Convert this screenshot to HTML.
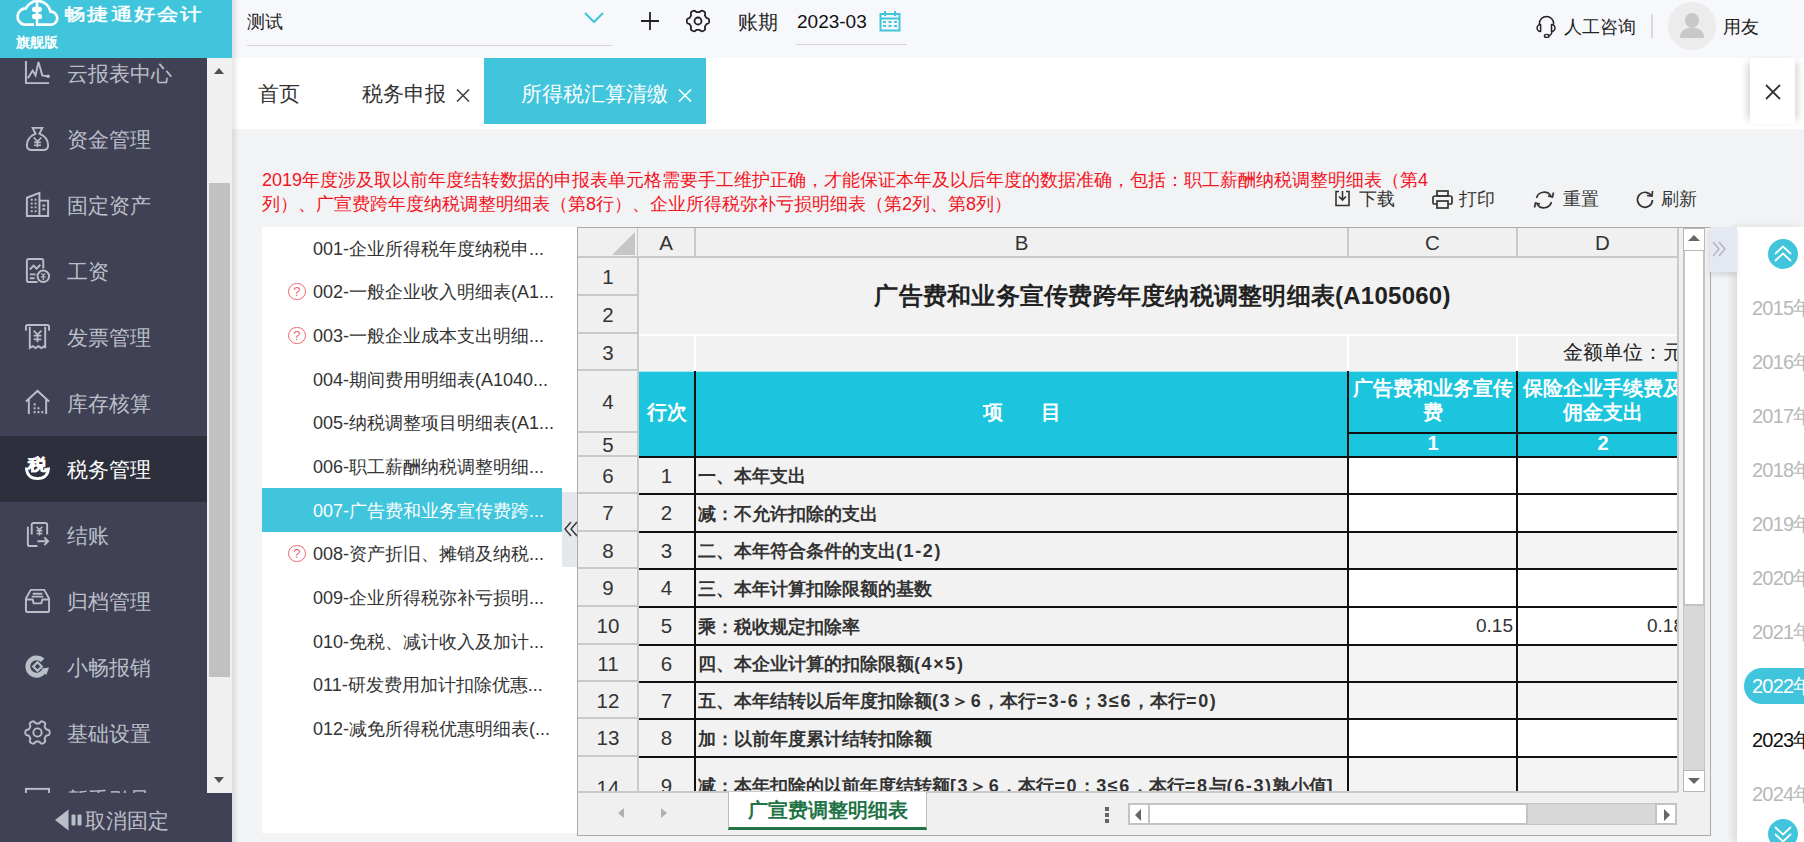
<!DOCTYPE html>
<html><head><meta charset="utf-8">
<style>
*{margin:0;padding:0;box-sizing:border-box;}
html,body{width:1804px;height:842px;overflow:hidden;font-family:"Liberation Sans",sans-serif;background:#f2f3f5;position:relative;color:#333;}
.abs{position:absolute;}
.nw{white-space:nowrap;}
/* sidebar */
#logo{left:0;top:0;width:232px;height:58px;background:#40c5dc;z-index:3;}
#side{left:0;top:58px;width:207px;height:735px;background:#414155;overflow:hidden;z-index:3;}
#sbar{left:207px;top:58px;width:25px;height:735px;background:#f0f0f0;z-index:3;}
#sfoot{left:0;top:793px;width:232px;height:49px;background:#414155;z-index:3;}
#sshadow{left:232px;top:0;width:7px;height:842px;background:linear-gradient(to right,rgba(0,0,0,0.10),rgba(0,0,0,0));z-index:2;}
.mi{position:absolute;left:0;width:207px;height:66px;}
.mi .t{position:absolute;left:67px;top:1px;line-height:66px;font-size:21px;color:#b9bfc7;white-space:nowrap;}
.mi svg{position:absolute;left:24px;top:19px;width:27px;height:27px;}
/* header */
#hdr{left:232px;top:0;width:1572px;height:58px;background:#f7f8fb;}
#tabs{left:232px;top:58px;width:1572px;height:70.6px;background:#fff;}
.tab{position:absolute;top:0;height:66px;line-height:72px;font-size:21px;color:#333;white-space:nowrap;}
/* notice */
#notice{left:262px;top:168px;font-size:18px;line-height:24px;color:#f5141e;white-space:nowrap;}
.tool{position:absolute;top:187px;height:24px;line-height:24px;font-size:17.5px;color:#333;white-space:nowrap;}
.tool svg{position:absolute;top:3px;}
/* list */
#list{left:262px;top:227px;width:315px;height:606px;background:#fff;}
.li{position:absolute;left:0;width:300px;height:43.6px;line-height:43.6px;font-size:18px;color:#333;white-space:nowrap;}
.li span{position:absolute;left:51px;top:1.5px;}
.li.act{background:#40c5dc;color:#fff;}
.q{position:absolute;left:26px;top:13px;width:17.5px;height:17.5px;border:1.5px solid #f0646e;border-radius:50%;color:#f0646e;font-size:13px;line-height:15px;text-align:center;}
#collapse{left:562px;top:492px;width:16px;height:75px;background:#e4e7ec;}
/* sheet */
#sheet{left:577px;top:227px;width:1134px;height:609px;border:1px solid #ababab;background:#f0f0f0;}
#grid{left:638px;top:0;width:1039px;height:792px;overflow:hidden;}
.c{position:absolute;}
.hl{position:absolute;left:0;width:1039px;height:2px;background:#111;}
.vl{position:absolute;width:2px;background:#111;}
.tn{position:absolute;left:0;width:57px;text-align:center;font-size:20.5px;color:#333;}
.tb{position:absolute;left:60px;margin-top:0.8px;font-size:18px;font-weight:bold;color:#333;white-space:nowrap;}
.a{letter-spacing:1.6px;}
.tv{position:absolute;text-align:right;font-size:19px;color:#333;white-space:nowrap;}
.rh{position:absolute;left:578px;width:60px;text-align:center;font-size:20.5px;color:#333;background:#f0f0f0;border-bottom:2px solid #c9c9c9;}
.colh{position:absolute;top:228px;height:30px;line-height:30px;z-index:2;text-align:center;font-size:20.5px;color:#333;background:#f0f0f0;border-right:2px solid #c9c9c9;border-bottom:2px solid #c9c9c9;}
.hw{color:#fff;font-weight:bold;font-size:20px;}
#years{left:1737px;top:227px;width:67px;height:615px;background:#fff;box-shadow:-4px 0 8px rgba(0,0,0,0.10);}
.yr{position:absolute;left:15px;height:36px;line-height:36px;font-size:20px;color:#b8b8b8;white-space:nowrap;letter-spacing:-0.8px;}
</style></head>
<body>
<div id="logo" class="abs">
  <svg class="abs" style="left:0;top:0" width="70" height="34" viewBox="0 0 70 34">
    <path d="M34 24.6 H24 A8.2 8.2 0 0 1 25.8 8.4 A13.2 13.2 0 0 1 50.6 11.7 A6.45 6.45 0 0 1 51 24.6 H37" fill="none" stroke="#fff" stroke-width="2.7"/>
    <line x1="37" y1="0" x2="37" y2="25.9" stroke="#fff" stroke-width="2.6"/>
    <rect x="32" y="6.7" width="10" height="5.2" rx="2.6" fill="#fff"/>
    <rect x="32" y="13.8" width="10" height="5.2" rx="2.6" fill="#fff"/>
  </svg>
  <div class="abs nw" style="left:64px;top:4px;font-size:18px;color:#fff;letter-spacing:1px;line-height:20px;-webkit-text-stroke:0.5px #fff;transform:scale(1.225,0.97);transform-origin:0 0;">畅捷通好会计</div>
  <div class="abs nw" style="left:16px;top:34px;font-size:14px;color:#fff;font-weight:bold;line-height:16px;">旗舰版</div>
</div>
<div id="side" class="abs">
<div class="mi" style="top:-18px;"><svg width="28" height="28" viewBox="0 0 28 28"><path d="M2 2 V25 H26" fill="none" stroke="#b9bfc7" stroke-width="2"/><path d="M4 20 L9 12 L12 17 L15 3 L19 17 L25 18" fill="none" stroke="#b9bfc7" stroke-width="2"/><circle cx="25" cy="18" r="1.8" fill="#b9bfc7"/></svg><div class="t" style="">云报表中心</div></div>
<div class="mi" style="top:48px;"><svg width="28" height="28" viewBox="0 0 28 28"><path d="M9 3 H19 L16 9 Q25 13 25 21 Q25 26 20 26 H8 Q3 26 3 21 Q3 13 12 9 Z" fill="none" stroke="#b9bfc7" stroke-width="2"/><path d="M10 13 L14 17 L18 13 M14 17 V23 M10.5 18 H17.5 M10.5 21 H17.5" fill="none" stroke="#b9bfc7" stroke-width="1.6"/></svg><div class="t" style="">资金管理</div></div>
<div class="mi" style="top:114px;"><svg width="28" height="28" viewBox="0 0 28 28"><path d="M3 26 V7 L16 2 V26 Z M16 10 H25 V26 H3" fill="none" stroke="#b9bfc7" stroke-width="2"/><path d="M7 9h2M11 9h2M7 13h2M11 13h2M7 17h2M11 17h2M7 21h2M11 21h2M19 15h3M19 19h3" stroke="#b9bfc7" stroke-width="2"/></svg><div class="t" style="">固定资产</div></div>
<div class="mi" style="top:180px;"><svg width="28" height="28" viewBox="0 0 28 28"><path d="M20 12 V4 Q20 2 18 2 H5 Q3 2 3 4 V24 Q3 26 5 26 H14" fill="none" stroke="#b9bfc7" stroke-width="2"/><path d="M6 13 L10 9 L13 12 L17 8" fill="none" stroke="#b9bfc7" stroke-width="2"/><path d="M6 18h6M6 22h5" stroke="#b9bfc7" stroke-width="2"/><circle cx="20" cy="20" r="6" fill="none" stroke="#b9bfc7" stroke-width="2"/><path d="M18 17 L20 19 L22 17 M20 19 V24 M17.5 20.5h5" fill="none" stroke="#b9bfc7" stroke-width="1.3"/></svg><div class="t" style="">工资</div></div>
<div class="mi" style="top:246px;"><svg width="28" height="28" viewBox="0 0 28 28"><path d="M2 8 V4 Q2 2 4 2 H24 Q26 2 26 4 V8 M6 4 V26 L9 24 L12 26 L15 24 L18 26 L21 24 L22 26 V4" fill="none" stroke="#b9bfc7" stroke-width="2"/><path d="M10 8 L14 12 L18 8 M14 12 V20 M10 13h8M10 17h8" fill="none" stroke="#b9bfc7" stroke-width="1.8"/></svg><div class="t" style="">发票管理</div></div>
<div class="mi" style="top:312px;"><svg width="28" height="28" viewBox="0 0 28 28"><path d="M2 13 L14 2 L26 13 M5 11 V26 M23 11 V26" fill="none" stroke="#b9bfc7" stroke-width="2"/><path d="M10 16h2M10 20h2M10 24h2M14 24h2M18 24h2M14 20h2" stroke="#b9bfc7" stroke-width="2.2"/></svg><div class="t" style="">库存核算</div></div>
<div class="mi" style="top:378px;background:#2d2f3c;"><svg width="28" height="28" viewBox="0 0 28 28"><path d="M2.5 13 Q3 24.5 14 24.5 Q25 24.5 25.5 13" fill="none" stroke="#fff" stroke-width="3"/><text x="4.2" y="16" font-size="17" font-weight="bold" fill="#fff" stroke="#fff" stroke-width="0.6" textLength="19.5" lengthAdjust="spacingAndGlyphs">税</text></svg><div class="t" style="color:#fff;">税务管理</div></div>
<div class="mi" style="top:444px;"><svg width="28" height="28" viewBox="0 0 28 28"><path d="M4 6 V24 Q4 26 6 26 H14" fill="none" stroke="#b9bfc7" stroke-width="2"/><path d="M8 14 V4 Q8 2 10 2 H22 Q24 2 24 4 V14" fill="none" stroke="#b9bfc7" stroke-width="2"/><path d="M13 6 L16 9 L19 6 M16 9 V15 M13 10h6M13 13h6" fill="none" stroke="#b9bfc7" stroke-width="1.6"/><path d="M14 21 H25 M21 17 L25 21 L21 25" fill="none" stroke="#b9bfc7" stroke-width="2"/></svg><div class="t" style="">结账</div></div>
<div class="mi" style="top:510px;"><svg width="28" height="28" viewBox="0 0 28 28"><path d="M7 3 H21 L26 12 V24 Q26 26 24 26 H4 Q2 26 2 24 V12 Z M2 13 H9 L10 17 H18 L19 13 H26" fill="none" stroke="#b9bfc7" stroke-width="2"/><path d="M9 7h10M8 10h12" stroke="#b9bfc7" stroke-width="2"/></svg><div class="t" style="">归档管理</div></div>
<div class="mi" style="top:576px;"><svg width="28" height="28" viewBox="0 0 28 28"><path d="M19.36 7.64 A9 9 0 1 0 21.16 17.80" fill="none" stroke="#b9bfc7" stroke-width="5"/><path d="M18 16 L26 15 L23 23 Z" fill="#b9bfc7"/><path d="M14 9.5 L18.5 14 L14 18.5 L9.5 14 Z" fill="none" stroke="#b9bfc7" stroke-width="2.2"/></svg><div class="t" style="">小畅报销</div></div>
<div class="mi" style="top:642px;"><svg width="28" height="28" viewBox="0 0 28 28"><path d="M26.60 14.00 L26.57 14.66 L26.48 15.31 L26.26 15.94 L25.71 16.49 L24.63 16.85 L23.54 17.10 L22.95 17.44 L22.63 17.84 L22.38 18.27 L22.14 18.70 L21.89 19.12 L21.65 19.56 L21.45 20.04 L21.45 20.71 L21.78 21.78 L22.01 22.90 L21.81 23.64 L21.38 24.15 L20.86 24.56 L20.30 24.91 L19.72 25.22 L19.10 25.46 L18.45 25.59 L17.70 25.38 L16.85 24.63 L16.09 23.81 L15.50 23.47 L14.99 23.40 L14.49 23.40 L14.00 23.40 L13.51 23.40 L13.01 23.40 L12.50 23.47 L11.91 23.81 L11.15 24.63 L10.30 25.38 L9.55 25.59 L8.90 25.46 L8.28 25.22 L7.70 24.91 L7.14 24.56 L6.62 24.15 L6.19 23.64 L5.99 22.90 L6.22 21.78 L6.55 20.71 L6.55 20.04 L6.35 19.56 L6.11 19.12 L5.86 18.70 L5.62 18.27 L5.37 17.84 L5.05 17.44 L4.46 17.10 L3.37 16.85 L2.29 16.49 L1.74 15.94 L1.52 15.31 L1.43 14.66 L1.40 14.00 L1.43 13.34 L1.52 12.69 L1.74 12.06 L2.29 11.51 L3.37 11.15 L4.46 10.90 L5.05 10.56 L5.37 10.16 L5.62 9.73 L5.86 9.30 L6.11 8.88 L6.35 8.44 L6.55 7.96 L6.55 7.29 L6.22 6.22 L5.99 5.10 L6.19 4.36 L6.62 3.85 L7.14 3.44 L7.70 3.09 L8.28 2.78 L8.90 2.54 L9.55 2.41 L10.30 2.62 L11.15 3.37 L11.91 4.19 L12.50 4.53 L13.01 4.60 L13.51 4.60 L14.00 4.60 L14.49 4.60 L14.99 4.60 L15.50 4.53 L16.09 4.19 L16.85 3.37 L17.70 2.62 L18.45 2.41 L19.10 2.54 L19.72 2.78 L20.30 3.09 L20.86 3.44 L21.38 3.85 L21.81 4.36 L22.01 5.10 L21.78 6.22 L21.45 7.29 L21.45 7.96 L21.65 8.44 L21.89 8.88 L22.14 9.30 L22.38 9.73 L22.63 10.16 L22.95 10.56 L23.54 10.90 L24.63 11.15 L25.71 11.51 L26.26 12.06 L26.48 12.69 L26.57 13.34Z" fill="none" stroke="#b9bfc7" stroke-width="2" stroke-linejoin="round"/><circle cx="14" cy="14" r="4.3" fill="none" stroke="#b9bfc7" stroke-width="2"/></svg><div class="t" style="">基础设置</div></div>
<div class="mi" style="top:708px;"><svg width="28" height="28" viewBox="0 0 28 28"><rect x="2" y="4" width="24" height="8" fill="none" stroke="#b9bfc7" stroke-width="2"/></svg><div class="t" style="">新手引导</div></div>
</div>
<div id="sbar" class="abs">
  <div class="abs" style="left:7px;top:10px;width:0;height:0;border-left:5.5px solid transparent;border-right:5.5px solid transparent;border-bottom:6px solid #505050;"></div>
  <div class="abs" style="left:2px;top:125px;width:21px;height:494px;background:#c1c1c1;"></div>
  <div class="abs" style="left:7px;top:719px;width:0;height:0;border-left:5.5px solid transparent;border-right:5.5px solid transparent;border-top:6px solid #505050;"></div>
</div>
<div id="sfoot" class="abs">
  <svg class="abs" style="left:55px;top:16px" width="30" height="23" viewBox="0 0 30 23">
    <path d="M0 11 L13.5 0.5 V21.5 Z" fill="#b9bfc7"/>
    <rect x="16.5" y="5.5" width="4" height="11" rx="1" fill="#b9bfc7"/>
    <rect x="22.5" y="5.5" width="4" height="11" rx="1" fill="#b9bfc7"/>
  </svg>
  <div class="abs nw" style="left:85px;top:1.5px;line-height:52px;font-size:21px;color:#b9bfc7;">取消固定</div>
</div>
<div id="sshadow" class="abs"></div>

<div id="hdr" class="abs">
  <div class="abs nw" style="left:15px;top:9px;font-size:18px;line-height:26px;color:#222;">测试</div>
  <div class="abs" style="left:15px;top:45px;width:365px;height:1px;background:#d5d5d8;"></div>
  <svg class="abs" style="left:352px;top:12px" width="20" height="12" viewBox="0 0 20 12"><path d="M1 1 L10 10 L19 1" fill="none" stroke="#40c5dc" stroke-width="2"/></svg>
  <svg class="abs" style="left:408px;top:11px" width="20" height="20" viewBox="0 0 20 20"><path d="M10 1 V19 M1 10 H19" stroke="#222" stroke-width="1.8"/></svg>
  <svg class="abs" style="left:454px;top:9px" width="24" height="24" viewBox="0 0 24 24"><path d="M23.20 12.00 L23.18 12.59 L23.10 13.17 L22.92 13.73 L22.49 14.23 L21.66 14.59 L20.82 14.87 L20.35 15.20 L20.07 15.59 L19.85 16.00 L19.62 16.40 L19.39 16.80 L19.15 17.19 L18.95 17.63 L18.89 18.20 L19.07 19.07 L19.18 19.97 L18.96 20.59 L18.56 21.03 L18.10 21.39 L17.60 21.70 L17.08 21.97 L16.54 22.20 L15.96 22.32 L15.31 22.20 L14.59 21.66 L13.93 21.07 L13.40 20.83 L12.92 20.79 L12.46 20.79 L12.00 20.80 L11.54 20.79 L11.08 20.79 L10.60 20.83 L10.07 21.07 L9.41 21.66 L8.69 22.20 L8.04 22.32 L7.46 22.20 L6.92 21.97 L6.40 21.70 L5.90 21.39 L5.44 21.03 L5.04 20.59 L4.82 19.97 L4.93 19.07 L5.11 18.20 L5.05 17.63 L4.85 17.19 L4.61 16.80 L4.38 16.40 L4.15 16.00 L3.93 15.59 L3.65 15.20 L3.18 14.87 L2.34 14.59 L1.51 14.23 L1.08 13.73 L0.90 13.17 L0.82 12.59 L0.80 12.00 L0.82 11.41 L0.90 10.83 L1.08 10.27 L1.51 9.77 L2.34 9.41 L3.18 9.13 L3.65 8.80 L3.93 8.41 L4.15 8.00 L4.38 7.60 L4.61 7.20 L4.85 6.81 L5.05 6.37 L5.11 5.80 L4.93 4.93 L4.82 4.03 L5.04 3.41 L5.44 2.97 L5.90 2.61 L6.40 2.30 L6.92 2.03 L7.46 1.80 L8.04 1.68 L8.69 1.80 L9.41 2.34 L10.07 2.93 L10.60 3.17 L11.08 3.21 L11.54 3.21 L12.00 3.20 L12.46 3.21 L12.92 3.21 L13.40 3.17 L13.93 2.93 L14.59 2.34 L15.31 1.80 L15.96 1.68 L16.54 1.80 L17.08 2.03 L17.60 2.30 L18.10 2.61 L18.56 2.97 L18.96 3.41 L19.18 4.03 L19.07 4.93 L18.89 5.80 L18.95 6.37 L19.15 6.81 L19.39 7.20 L19.62 7.60 L19.85 8.00 L20.07 8.41 L20.35 8.80 L20.82 9.13 L21.66 9.41 L22.49 9.77 L22.92 10.27 L23.10 10.83 L23.18 11.41Z" fill="none" stroke="#222" stroke-width="1.8" stroke-linejoin="round"/><circle cx="12" cy="12" r="3.5" fill="none" stroke="#222" stroke-width="1.8"/></svg>
  <div class="abs nw" style="left:506px;top:9px;font-size:20px;line-height:26px;color:#222;">账期</div>
  <div class="abs nw" style="left:565px;top:9px;font-size:19px;line-height:26px;color:#111;">2023-03</div>
  <svg class="abs" style="left:647px;top:10px" width="22" height="22" viewBox="0 0 22 22"><rect x="1.5" y="4" width="19" height="16.5" fill="none" stroke="#40c5dc" stroke-width="2"/><path d="M6 1 V6 M16 1 V6 M1 8.5 H21 M4 12h3M9.5 12h3M15 12h3M4 16h3M9.5 16h3M15 16h3" stroke="#40c5dc" stroke-width="2"/></svg>
  <div class="abs" style="left:564px;top:44px;width:111px;height:1px;background:#d5d5d8;"></div>
  <svg class="abs" style="left:1303px;top:10px" width="24" height="30" viewBox="1535 10 24 30"><path d="M1539.4 24.5 V23.5 A7.1 7.1 0 0 1 1553.6 23.5 V24.5" fill="none" stroke="#222" stroke-width="1.5"/><path d="M1540.6 24.5 V31.5 A3.5 3.5 0 0 1 1540.6 24.5 Z M1551.5 24.5 A3.5 3.5 0 0 1 1551.5 31.5 Z" fill="none" stroke="#222" stroke-width="1.5" stroke-linejoin="round"/><path d="M1552 31.5 Q1551.5 35.3 1549 35.8" fill="none" stroke="#222" stroke-width="1.4"/><ellipse cx="1546.7" cy="35.9" rx="2.3" ry="1.5" fill="none" stroke="#222" stroke-width="1.4"/></svg>
  <div class="abs nw" style="left:1332px;top:14px;font-size:18px;line-height:26px;color:#222;">人工咨询</div>
  <div class="abs" style="left:1419px;top:14px;width:2px;height:24px;background:#d8d8d8;"></div>
  <div class="abs" style="left:1436px;top:2px;width:48px;height:48px;border-radius:50%;background:#ececec;overflow:hidden;">
    <div class="abs" style="left:17px;top:11px;width:14px;height:15px;border-radius:50%;background:#c8c8c8;"></div>
    <div class="abs" style="left:12px;top:26px;width:24px;height:10px;border-radius:9px 9px 1px 1px;background:#c8c8c8;"></div>
  </div>
  <div class="abs nw" style="left:1491px;top:14px;font-size:18px;line-height:26px;color:#222;">用友</div>
</div>

<div id="tabs" class="abs">
  <div class="tab" style="left:26px;">首页</div>
  <div class="tab" style="left:130px;">税务申报<svg style="position:absolute;left:94px;top:31px" width="14" height="13" viewBox="0 0 14 13"><path d="M1 0.5 L13 12.5 M13 0.5 L1 12.5" stroke="#444" stroke-width="1.6"/></svg></div>
  <div class="tab" style="left:252px;width:222px;background:#40c5dc;color:#fff;padding-left:37px;">所得税汇算清缴<svg style="position:absolute;left:194px;top:31px" width="14" height="13" viewBox="0 0 14 13"><path d="M1 0.5 L13 12.5 M13 0.5 L1 12.5" stroke="#fff" stroke-width="1.6"/></svg></div>
  <div class="abs" style="left:1518px;top:0;width:45px;height:66px;background:#fff;box-shadow:-7px 0 7px -4px rgba(0,0,0,0.16), 7px 0 7px -4px rgba(0,0,0,0.16);"></div>
  <svg class="abs" style="left:1533px;top:26px" width="16" height="16" viewBox="0 0 16 16"><path d="M1 1 L15 15 M15 1 L1 15" stroke="#333" stroke-width="1.8"/></svg>
</div>

<div id="notice" class="abs">2019年度涉及取以前年度结转数据的申报表单元格需要手工维护正确，才能保证本年及以后年度的数据准确，包括：职工薪酬纳税调整明细表（第4<br>列）、广宣费跨年度纳税调整明细表（第8行）、企业所得税弥补亏损明细表（第2列、第8列）</div>

<div class="tool" style="left:1334px;"><svg width="17" height="17" viewBox="0 0 17 17"><path d="M5 1.5 H2 V15.5 H15 V1.5 H12" fill="none" stroke="#333" stroke-width="1.6"/><path d="M8.5 1 V10 M5 6.5 L8.5 10 L12 6.5" fill="none" stroke="#333" stroke-width="1.6"/></svg><span style="position:absolute;left:25px;">下载</span></div>
<div class="tool" style="left:1432px;"><svg width="21" height="19" viewBox="0 0 21 19"><rect x="5" y="1" width="11" height="5" fill="none" stroke="#333" stroke-width="1.7"/><path d="M5 14 H2 Q1 14 1 12 V8 Q1 6 3 6 H18 Q20 6 20 8 V12 Q20 14 19 14 H16" fill="none" stroke="#333" stroke-width="1.7"/><rect x="5" y="11" width="11" height="7" fill="none" stroke="#333" stroke-width="1.7"/></svg><span style="position:absolute;left:27px;">打印</span></div>
<div class="tool" style="left:1533px;"><svg width="22" height="20" viewBox="0 0 22 20"><path d="M3.5 8 A8 8 0 0 1 18 6 M18.5 12 A8 8 0 0 1 4 14" fill="none" stroke="#333" stroke-width="1.7"/><path d="M15 6 L19.5 7 L20.5 2.5 M7 14 L2.5 13 L1.5 17.5" fill="none" stroke="#333" stroke-width="1.7"/></svg><span style="position:absolute;left:30px;">重置</span></div>
<div class="tool" style="left:1636px;"><svg width="18" height="19" viewBox="0 0 18 19"><path d="M15.5 6 A7.5 7.5 0 1 0 16.5 10" fill="none" stroke="#333" stroke-width="1.7"/><path d="M11 5.5 L16 6 L16.5 1" fill="none" stroke="#333" stroke-width="1.7"/></svg><span style="position:absolute;left:25px;">刷新</span></div>

<div id="list" class="abs">
<div class="li" style="top:-0.7px"><span>001-企业所得税年度纳税申...</span></div>
<div class="li" style="top:42.9px"><div class="q">?</div><span>002-一般企业收入明细表(A1...</span></div>
<div class="li" style="top:86.6px"><div class="q">?</div><span>003-一般企业成本支出明细...</span></div>
<div class="li" style="top:130.2px"><span>004-期间费用明细表(A1040...</span></div>
<div class="li" style="top:173.9px"><span>005-纳税调整项目明细表(A1...</span></div>
<div class="li" style="top:217.6px"><span>006-职工薪酬纳税调整明细...</span></div>
<div class="li act" style="top:261.2px"><span>007-广告费和业务宣传费跨...</span></div>
<div class="li" style="top:304.9px"><div class="q">?</div><span>008-资产折旧、摊销及纳税...</span></div>
<div class="li" style="top:348.5px"><span>009-企业所得税弥补亏损明...</span></div>
<div class="li" style="top:392.1px"><span>010-免税、减计收入及加计...</span></div>
<div class="li" style="top:435.8px"><span>011-研发费用加计扣除优惠...</span></div>
<div class="li" style="top:479.4px"><span>012-减免所得税优惠明细表(...</span></div>
</div>
<div id="collapse" class="abs"><svg class="abs" style="left:2px;top:29px" width="14" height="16" viewBox="0 0 14 16"><path d="M7 1 L1 8 L7 15 M13 1 L7 8 L13 15" fill="none" stroke="#333" stroke-width="1.4"/></svg></div>

<div id="sheet" class="abs"></div>
<!-- corner + column headers -->
<div class="colh" style="left:578px;width:61px;"><div class="abs" style="left:34px;top:4px;width:0;height:0;border-left:23px solid transparent;border-bottom:23px solid #c6c6c6;"></div></div>
<div class="colh" style="left:638px;width:58px;">A</div>
<div class="colh" style="left:696px;width:653px;">B</div>
<div class="colh" style="left:1349px;width:169px;">C</div>
<div class="colh" style="left:1518px;width:159px;border-right:none;padding-left:10px;">D</div>
<div class="abs" style="left:1677px;top:228px;width:2px;height:564px;background:#c9c9c9;"></div>
<div class="abs" style="left:637px;top:257px;width:2px;height:535px;background:#c9c9c9;z-index:1;"></div>
<div class="rh" style="top:257px;height:39px;line-height:39px">1</div>
<div class="rh" style="top:296px;height:38px;line-height:38px">2</div>
<div class="rh" style="top:334px;height:37px;line-height:37px">3</div>
<div class="rh" style="top:371px;height:62px;line-height:62px">4</div>
<div class="rh" style="top:433px;height:24px;line-height:24px">5</div>
<div class="rh" style="top:457px;height:37px;line-height:37px">6</div>
<div class="rh" style="top:494px;height:38px;line-height:38px">7</div>
<div class="rh" style="top:532px;height:37px;line-height:37px">8</div>
<div class="rh" style="top:569px;height:38px;line-height:38px">9</div>
<div class="rh" style="top:607px;height:38px;line-height:38px">10</div>
<div class="rh" style="top:645px;height:37px;line-height:37px">11</div>
<div class="rh" style="top:682px;height:37px;line-height:37px">12</div>
<div class="rh" style="top:719px;height:38px;line-height:38px">13</div>
<div class="rh" style="top:757px;height:35px;line-height:62px;border-bottom:none;overflow:hidden">14</div>
<div id="grid" class="abs">
  <!-- title rows 1-2 -->
  <div class="c" style="left:0;top:257px;width:1049px;height:77px;background:#f2f2f2;"></div>
  <div class="c nw" style="left:0;top:257px;width:1049px;height:77px;line-height:77px;text-align:center;font-size:24px;letter-spacing:0.25px;font-weight:bold;color:#222;">广告费和业务宣传费跨年度纳税调整明细表(A105060)</div>
  <!-- row 3 -->
  <div class="c" style="left:0;top:334px;width:1049px;height:37px;background:#f2f2f2;border-top:2px solid #fff;"></div>
  <div class="c" style="left:56px;top:334px;width:2px;height:37px;background:#fff;"></div>
  <div class="c" style="left:709px;top:334px;width:2px;height:37px;background:#fff;"></div>
  <div class="c" style="left:878px;top:334px;width:2px;height:37px;background:#fff;"></div>
  <div class="c nw" style="left:839px;top:334px;width:206px;height:37px;line-height:37px;text-align:right;font-size:20px;color:#222;">金额单位：元</div>
  <!-- teal header rows 4-5 -->
  <div class="c" style="left:0;top:371px;width:1049px;height:86px;background:#1bc5dd;border-top:1px solid #a8e6f0;"></div>
  <div class="c hw nw" style="left:0;top:371px;width:57px;height:86px;line-height:82px;text-align:center;">行次</div>
  <div class="c hw nw" style="left:57px;top:371px;width:653px;height:86px;line-height:82px;text-align:center;">项<span style="display:inline-block;width:38px"></span>目</div>
  <div class="c hw" style="left:711px;top:376px;width:168px;line-height:24px;text-align:center;">广告费和业务宣传<br>费</div>
  <div class="c hw nw" style="left:880px;top:376px;width:170px;line-height:24px;text-align:center;">保险企业手续费及<br>佣金支出</div>
  <div class="c hw" style="left:711px;top:431px;width:168px;height:24px;line-height:24px;text-align:center;">1</div>
  <div class="c hw" style="left:880px;top:431px;width:170px;height:24px;line-height:24px;text-align:center;">2</div>
  <div class="c" style="left:711px;top:432px;width:340px;height:2px;background:#111;"></div>
<div class="c" style="left:0;top:457px;width:57px;height:37px;background:#f2f2f2"></div>
<div class="c" style="left:57px;top:457px;width:653px;height:37px;background:#f2f2f2"></div>
<div class="c" style="left:710px;top:457px;width:169px;height:37px;background:#fff"></div>
<div class="c" style="left:879px;top:457px;width:170px;height:37px;background:#fff"></div>
<div class="tn" style="top:457px;height:37px;line-height:37px">1</div>
<div class="tb" style="top:457px;height:37px;line-height:37px">一、本年支出</div>
<div class="c" style="left:0;top:494px;width:57px;height:38px;background:#f2f2f2"></div>
<div class="c" style="left:57px;top:494px;width:653px;height:38px;background:#f2f2f2"></div>
<div class="c" style="left:710px;top:494px;width:169px;height:38px;background:#fff"></div>
<div class="c" style="left:879px;top:494px;width:170px;height:38px;background:#fff"></div>
<div class="tn" style="top:494px;height:38px;line-height:38px">2</div>
<div class="tb" style="top:494px;height:38px;line-height:38px">减：不允许扣除的支出</div>
<div class="c" style="left:0;top:532px;width:57px;height:37px;background:#f2f2f2"></div>
<div class="c" style="left:57px;top:532px;width:653px;height:37px;background:#f2f2f2"></div>
<div class="c" style="left:710px;top:532px;width:169px;height:37px;background:#f4f4f4"></div>
<div class="c" style="left:879px;top:532px;width:170px;height:37px;background:#f4f4f4"></div>
<div class="tn" style="top:532px;height:37px;line-height:37px">3</div>
<div class="tb" style="top:532px;height:37px;line-height:37px">二、本年符合条件的支出<span class="a">(1-2)</span></div>
<div class="c" style="left:0;top:569px;width:57px;height:38px;background:#f2f2f2"></div>
<div class="c" style="left:57px;top:569px;width:653px;height:38px;background:#f2f2f2"></div>
<div class="c" style="left:710px;top:569px;width:169px;height:38px;background:#fff"></div>
<div class="c" style="left:879px;top:569px;width:170px;height:38px;background:#fff"></div>
<div class="tn" style="top:569px;height:38px;line-height:38px">4</div>
<div class="tb" style="top:569px;height:38px;line-height:38px">三、本年计算扣除限额的基数</div>
<div class="c" style="left:0;top:607px;width:57px;height:38px;background:#f2f2f2"></div>
<div class="c" style="left:57px;top:607px;width:653px;height:38px;background:#f2f2f2"></div>
<div class="c" style="left:710px;top:607px;width:169px;height:38px;background:#fff"></div>
<div class="c" style="left:879px;top:607px;width:170px;height:38px;background:#fff"></div>
<div class="tn" style="top:607px;height:38px;line-height:38px">5</div>
<div class="tb" style="top:607px;height:38px;line-height:38px">乘：税收规定扣除率</div>
<div class="tv" style="left:710px;top:607px;height:38px;line-height:38px;width:165px">0.15</div>
<div class="tv" style="left:879px;top:607px;height:38px;line-height:38px;width:170px;text-align:left;padding-left:130px">0.18</div>
<div class="c" style="left:0;top:645px;width:57px;height:37px;background:#f2f2f2"></div>
<div class="c" style="left:57px;top:645px;width:653px;height:37px;background:#f2f2f2"></div>
<div class="c" style="left:710px;top:645px;width:169px;height:37px;background:#f4f4f4"></div>
<div class="c" style="left:879px;top:645px;width:170px;height:37px;background:#f4f4f4"></div>
<div class="tn" style="top:645px;height:37px;line-height:37px">6</div>
<div class="tb" style="top:645px;height:37px;line-height:37px">四、本企业计算的扣除限额<span class="a">(4×5)</span></div>
<div class="c" style="left:0;top:682px;width:57px;height:37px;background:#f2f2f2"></div>
<div class="c" style="left:57px;top:682px;width:653px;height:37px;background:#f2f2f2"></div>
<div class="c" style="left:710px;top:682px;width:169px;height:37px;background:#f4f4f4"></div>
<div class="c" style="left:879px;top:682px;width:170px;height:37px;background:#f4f4f4"></div>
<div class="tn" style="top:682px;height:37px;line-height:37px">7</div>
<div class="tb" style="top:682px;height:37px;line-height:37px">五、本年结转以后年度扣除额<span class="a">(3＞6</span>，本行<span class="a">=3-6</span>；<span class="a">3≤6</span>，本行<span class="a">=0)</span></div>
<div class="c" style="left:0;top:719px;width:57px;height:38px;background:#f2f2f2"></div>
<div class="c" style="left:57px;top:719px;width:653px;height:38px;background:#f2f2f2"></div>
<div class="c" style="left:710px;top:719px;width:169px;height:38px;background:#fff"></div>
<div class="c" style="left:879px;top:719px;width:170px;height:38px;background:#fff"></div>
<div class="tn" style="top:719px;height:38px;line-height:38px">8</div>
<div class="tb" style="top:719px;height:38px;line-height:38px">加：以前年度累计结转扣除额</div>
<div class="c" style="left:0;top:757px;width:57px;height:73px;background:#f2f2f2"></div>
<div class="c" style="left:57px;top:757px;width:653px;height:73px;background:#f2f2f2"></div>
<div class="c" style="left:710px;top:757px;width:169px;height:73px;background:#f4f4f4"></div>
<div class="c" style="left:879px;top:757px;width:170px;height:73px;background:#f4f4f4"></div>
<div class="tn" style="top:767px;height:73px;line-height:37px">9</div>
<div class="tb" style="top:767px;height:73px;line-height:37px">减：本年扣除的以前年度结转额<span class="a">[3＞6</span>，本行<span class="a">=0</span>；<span class="a">3≤6</span>，本行<span class="a">=8</span>与<span class="a">(6-3)</span>孰小值<span class="a">]</span></div>
<div class="hl" style="top:456px"></div>
<div class="hl" style="top:493px"></div>
<div class="hl" style="top:531px"></div>
<div class="hl" style="top:568px"></div>
<div class="hl" style="top:606px"></div>
<div class="hl" style="top:644px"></div>
<div class="hl" style="top:681px"></div>
<div class="hl" style="top:718px"></div>
<div class="hl" style="top:756px"></div>
  <div class="vl" style="left:56px;top:371px;height:500px;"></div>
  <div class="vl" style="left:709px;top:371px;height:500px;"></div>
  <div class="vl" style="left:878px;top:371px;height:500px;"></div>
</div>
<!-- vertical scrollbar -->
<div class="abs" style="left:1683px;top:228px;width:22px;height:564px;background:#d8d8d8;border:1px solid #c6c6c6;"></div>
<div class="abs" style="left:1683px;top:228px;width:22px;height:378px;background:#fff;border:2px solid #c3c3c3;"></div>
<div class="abs" style="left:1683px;top:228px;width:22px;height:23px;background:#fff;border:1.5px solid #b8b8b8;"><div class="abs" style="left:4px;top:6px;width:0;height:0;border-left:6px solid transparent;border-right:6px solid transparent;border-bottom:6px solid #666;"></div></div>
<div class="abs" style="left:1683px;top:770px;width:22px;height:22px;background:#fff;border:1.5px solid #b8b8b8;"><div class="abs" style="left:4px;top:7px;width:0;height:0;border-left:6px solid transparent;border-right:6px solid transparent;border-top:6px solid #666;"></div></div>
<!-- bottom tab strip -->
<div class="abs" style="left:578px;top:791px;width:1100px;height:2px;background:#c9c9c9;"></div>
<div class="abs" style="left:618px;top:808px;width:0;height:0;border-top:5px solid transparent;border-bottom:5px solid transparent;border-right:6px solid #b0b0b0;"></div>
<div class="abs" style="left:661px;top:808px;width:0;height:0;border-top:5px solid transparent;border-bottom:5px solid transparent;border-left:6px solid #b0b0b0;"></div>
<div class="abs nw" style="left:728px;top:792px;width:199px;height:38px;background:#fff;border-left:1px solid #bbb;border-right:1px solid #bbb;border-bottom:3px solid #217346;line-height:36px;text-align:center;font-size:19.5px;font-weight:bold;color:#217346;">广宣费调整明细表</div>
<div class="abs" style="left:1105px;top:807px;width:4px;height:4px;background:#666;"></div>
<div class="abs" style="left:1105px;top:813px;width:4px;height:4px;background:#666;"></div>
<div class="abs" style="left:1105px;top:819px;width:4px;height:4px;background:#666;"></div>
<div class="abs" style="left:1128px;top:803px;width:549px;height:22px;background:#d8d8d8;border:1px solid #c6c6c6;"></div>
<div class="abs" style="left:1128px;top:803px;width:400px;height:22px;background:#fff;border:2px solid #c3c3c3;"></div>
<div class="abs" style="left:1128px;top:803px;width:22px;height:22px;background:#fff;border:2px solid #c3c3c3;"><div class="abs" style="left:5px;top:4px;width:0;height:0;border-top:6px solid transparent;border-bottom:6px solid transparent;border-right:6px solid #666;"></div></div>
<div class="abs" style="left:1655px;top:803px;width:22px;height:22px;background:#fff;border:2px solid #c3c3c3;"><div class="abs" style="left:7px;top:4px;width:0;height:0;border-top:6px solid transparent;border-bottom:6px solid transparent;border-left:6px solid #666;"></div></div>

<!-- expand button -->
<div class="abs" style="left:1710px;top:227px;width:27px;height:45px;background:#e4e8f2;box-shadow:0 3px 5px rgba(0,0,0,0.12);z-index:5;"><svg class="abs" style="left:2px;top:14px" width="15" height="16" viewBox="0 0 15 16"><path d="M1 1 L7 8 L1 15 M7 1 L13 8 L7 15" fill="none" stroke="#b4b4c0" stroke-width="1.4"/></svg></div>

<div id="years" class="abs">
  <div class="abs" style="left:31px;top:12px;width:30px;height:30px;border-radius:50%;background:#40c5dc;"><svg class="abs" style="left:6px;top:6px" width="18" height="18" viewBox="0 0 18 18"><path d="M1 9 L9 1.5 L17 9 M1 16 L9 8.5 L17 16" fill="none" stroke="#fff" stroke-width="1.8"/></svg></div>
  <div class="yr" style="top:63px;">2015年</div>
  <div class="yr" style="top:117px;">2016年</div>
  <div class="yr" style="top:171px;">2017年</div>
  <div class="yr" style="top:225px;">2018年</div>
  <div class="yr" style="top:279px;">2019年</div>
  <div class="yr" style="top:333px;">2020年</div>
  <div class="yr" style="top:387px;">2021年</div>
  <div class="abs" style="left:7px;top:441px;width:80px;height:36px;border-radius:18px;background:#40c5dc;"></div>
  <div class="yr" style="top:441px;color:#fff;">2022年</div>
  <div class="yr" style="top:495px;color:#111;">2023年</div>
  <div class="yr" style="top:549px;">2024年</div>
  <div class="abs" style="left:31px;top:592px;width:30px;height:30px;border-radius:50%;background:#40c5dc;"><svg class="abs" style="left:6px;top:6px" width="18" height="18" viewBox="0 0 18 18"><path d="M1 2 L9 9.5 L17 2 M1 9 L9 16.5 L17 9" fill="none" stroke="#fff" stroke-width="1.8"/></svg></div>
</div>
</body></html>
